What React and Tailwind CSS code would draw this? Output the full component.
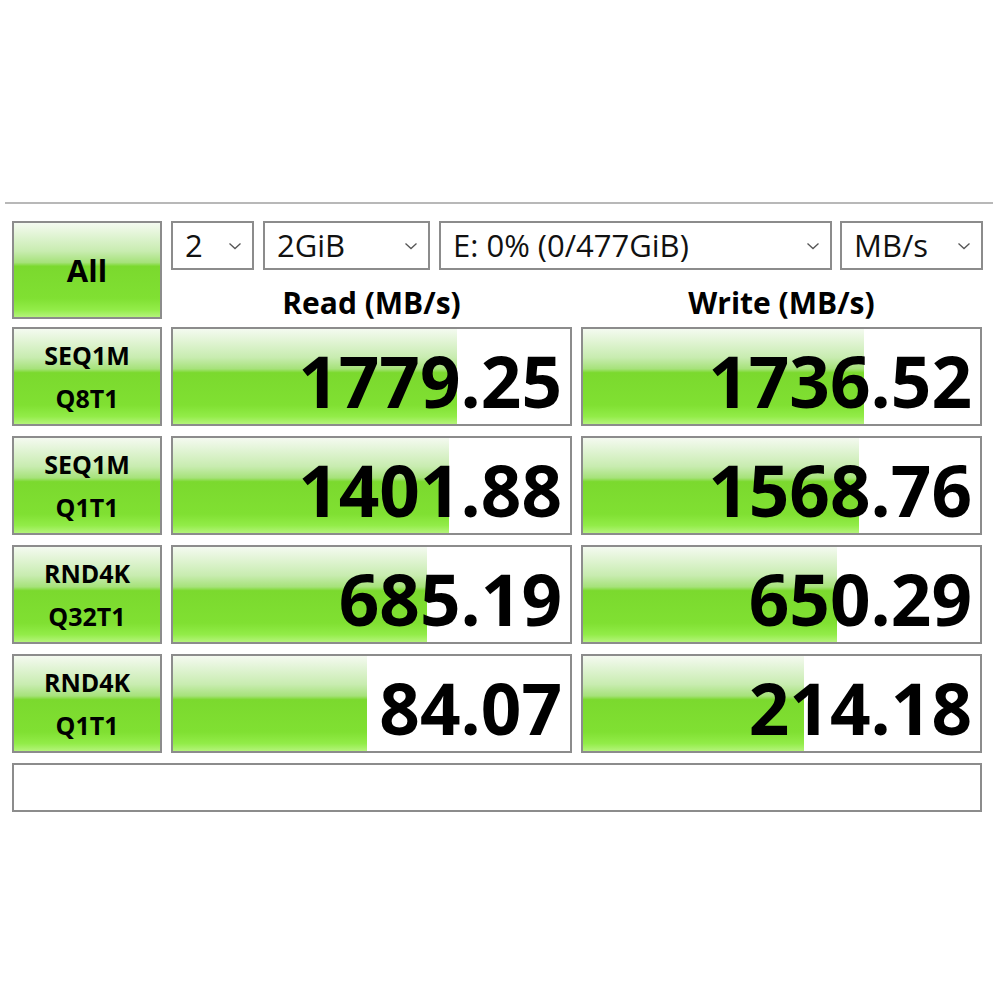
const rows = [
    { name: 'SEQ1M', sub: 'Q8T1', read: '1779.25', readW: 284, write: '1736.52', writeW: 281 },
    { name: 'SEQ1M', sub: 'Q1T1', read: '1401.88', readW: 276, write: '1568.76', writeW: 276 },
    { name: 'RND4K', sub: 'Q32T1', read: '685.19', readW: 254, write: '650.29', writeW: 254 },
    { name: 'RND4K', sub: 'Q1T1', read: '84.07', readW: 194, write: '214.18', writeW: 221 }
];

const greenBg = 'bg-[linear-gradient(to_bottom,#f4faf0_0%,#c8ecb0_30%,#a6e27a_42%,#7bd92e_46%,#80e032_80%,#92ec48_92%,#b4f47a_100%)]';

function Chevron() {
    return (
        <svg width="14" height="8" viewBox="0 0 14 8" className="shrink-0">
            <path d="M1.5 1.5 L7 6.5 L12.5 1.5" fill="none" stroke="#555" strokeWidth="1.3" />
        </svg>
    );
}

function Select({ value, width }) {
    return (
        <div
            className="h-[49px] border-2 border-[#8c8c8c] bg-white flex items-center justify-between pl-[12px] pr-[10px] text-[31px] text-[#111]"
            style={{ width }}
        >
            <span className="leading-none">{value}</span>
            <Chevron />
        </div>
    );
}

function ResultCell({ value, barWidth }) {
    return (
        <div className="relative h-[99px] border-2 border-[#8c8c8c] bg-white overflow-hidden">
            <div className={`absolute left-0 top-0 bottom-0 ${greenBg}`} style={{ width: barWidth }} />
            <div className="relative h-full flex items-center justify-end pr-[8px] pt-[8px] text-[71px] font-bold leading-none text-black">
                {value}
            </div>
        </div>
    );
}

export default function App() {
    return (
        <div className="w-[1001px] h-[1001px] bg-white overflow-hidden font-['Open_Sans',sans-serif]">
            <div className="mt-[202px] mx-[5px] w-[988px] h-[2px] bg-[#b8b8b8]" />

            <div className="px-[12px] pt-[17px] flex flex-col gap-[10px]">
                <div className="flex gap-[9px] mb-[-2px]">
                    <div className={`w-[150px] h-[98px] border-2 border-[#8c8c8c] ${greenBg} flex items-center justify-center text-[31px] font-bold text-black`}>
                        All
                    </div>
                    <div className="flex flex-col">
                        <div className="flex">
                            <Select value="2" width={83} />
                            <div className="w-[9px]" />
                            <Select value="2GiB" width={167} />
                            <div className="w-[9px]" />
                            <Select value="E: 0% (0/477GiB)" width={393} />
                            <div className="w-[8px]" />
                            <Select value="MB/s" width={143} />
                        </div>
                        <div className="flex gap-[9px] pt-[18px]">
                            <div className="w-[401px] text-center text-[30px] font-bold leading-none">Read (MB/s)</div>
                            <div className="w-[401px] text-center text-[30px] font-bold leading-none">Write (MB/s)</div>
                        </div>
                    </div>
                </div>

                {rows.map((row, index) => (
                    <div key={index} className="grid grid-cols-[150px_401px_401px] gap-x-[9px]">
                        <div className={`h-[99px] border-2 border-[#8c8c8c] ${greenBg} flex flex-col items-center justify-center text-[25px] font-bold leading-[43px] text-black`}>
                            <span>{row.name}</span>
                            <span>{row.sub}</span>
                        </div>
                        <ResultCell value={row.read} barWidth={row.readW} />
                        <ResultCell value={row.write} barWidth={row.writeW} />
                    </div>
                ))}

                <div className="w-[970px] h-[49px] border-2 border-[#8c8c8c] bg-white" />
            </div>
        </div>
    );
}
